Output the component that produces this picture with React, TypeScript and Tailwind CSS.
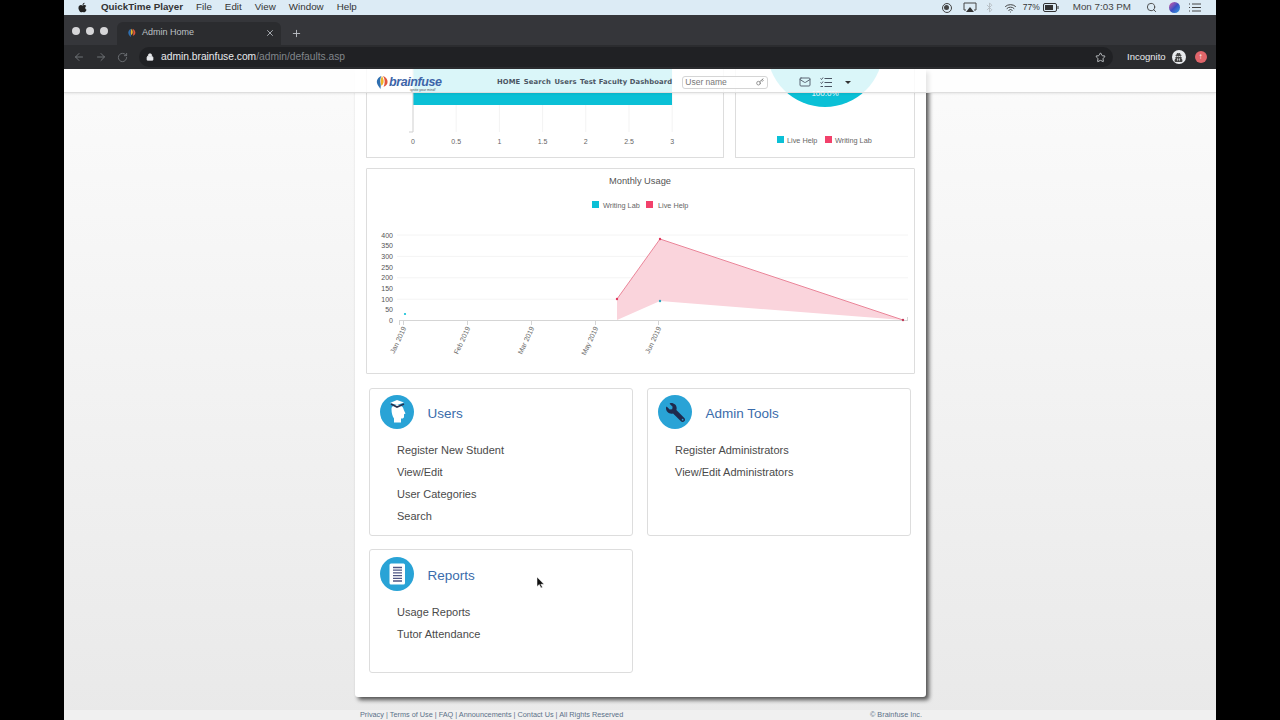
import type { ReactNode } from "react";
import { ArrowLeft, ArrowRight, Bluetooth, Key, Lock, Mail, Plus, RotateCw, Search, Star, Wifi, X } from "lucide-react";
import { FaApple, FaUserSecret, FaWrench } from "react-icons/fa";

const sans = { fontFamily: '"Liberation Sans", Arial, sans-serif' };

function BrainfuseMark({ size = 14 }: { size?: number }) {
  return (
    <svg width={size} height={size} viewBox="0 0 14 14">
      <path d="M6 1C3 2 1 5 2 8c.6 2 2 3 3 5 .6-2 .4-4 0-6C4.700 5 5 3 6 1z" fill="#2f6fb0" />
      <path d="M6.500 1C5 4 5 7 6 10c2-1 2.500-4 1.800-6C7.500 3 7 2 6.500 1z" fill="#f0b429" />
      <path d="M7.500 1c3 1 5 4 4 7-.5 1.500-2 2.500-3.500 3 1.500-3 1.500-7-.5-10z" fill="#e2553d" />
    </svg>
  );
}

function MenuBar() {
  return (
    <div className="flex h-[15px] items-center bg-[#dcebf5] text-[9.8px] text-[#333]" style={sans}>
      <FaApple className="ml-[13px] h-[11px] w-[11px] text-[#222]" />
      <span className="ml-[13px] font-bold">QuickTime Player</span>
      <span className="ml-[13px]">File</span>
      <span className="ml-[13px]">Edit</span>
      <span className="ml-[13px]">View</span>
      <span className="ml-[13px]">Window</span>
      <span className="ml-[13px]">Help</span>
      <div className="ml-auto flex h-full items-center">
        <span className="flex h-[10px] w-[10px] items-center justify-center rounded-full border border-[#444]">
          <span className="h-[5px] w-[5px] rounded-full bg-[#444]" />
        </span>
        <svg className="ml-[11px]" width="14" height="11" viewBox="0 0 14 11">
          <path d="M3 8H1V1h12v7h-2" fill="none" stroke="#444" strokeWidth="1" />
          <path d="M7 5l4 5H3z" fill="#333" />
        </svg>
        <Bluetooth className="ml-[7px] h-[11px] w-[11px] text-[#b5bcc2]" />
        <Wifi className="ml-[9px] h-[12px] w-[13px] text-[#444]" />
        <span className="ml-[6px] text-[8.5px]">77%</span>
        <svg className="ml-[3px]" width="16" height="9" viewBox="0 0 16 9">
          <rect x="0.5" y="0.5" width="13" height="8" rx="1.5" fill="none" stroke="#333" />
          <rect x="2" y="2" width="8" height="5" fill="#333" />
          <rect x="14.5" y="3" width="1" height="3" fill="#333" />
        </svg>
        <span className="ml-[14px] text-[#444]">Mon 7:03 PM</span>
        <Search className="ml-[15px] h-[11px] w-[11px] text-[#444]" />
        <span className="ml-[12px] h-[11px] w-[11px] rounded-full bg-gradient-to-br from-[#d84aa0] via-[#3b4fc4] to-[#2aa0e0]" />
        <svg className="ml-[8px] mr-[15px]" width="13" height="9" viewBox="0 0 13 9">
          <path d="M4 1h9M4 4.5h9M4 8h9M1 1h1M1 4.5h1M1 8h1" stroke="#444" strokeWidth="1" />
        </svg>
      </div>
    </div>
  );
}

function TabBar() {
  return (
    <div className="flex h-[30px] items-end bg-[#35363a]" style={sans}>
      <div className="mb-[10px] ml-[8px] flex gap-[6px]">
        <span className="h-[8px] w-[8px] rounded-full bg-[#d6d6d8]" />
        <span className="h-[8px] w-[8px] rounded-full bg-[#d6d6d8]" />
        <span className="h-[8px] w-[8px] rounded-full bg-[#d6d6d8]" />
      </div>
      <div className="ml-[9px] flex h-[23px] w-[164px] items-center rounded-t-md bg-[#2b2c2f] pb-[1px] pl-[10px] text-[9px] text-[#bdc1c6]">
        <BrainfuseMark size={10} />
        <span className="ml-[5px]">Admin Home</span>
        <X className="ml-auto mr-[6px] h-[10px] w-[10px]" />
      </div>
      <Plus className="mb-[6px] ml-[10px] h-[11px] w-[11px] text-[#bdc1c6]" />
    </div>
  );
}

function ToolBar() {
  return (
    <div className="flex h-[24px] items-center bg-[#2b2c2f] text-[#6f7276]" style={sans}>
      <ArrowLeft className="ml-[9px] h-[12px] w-[12px]" />
      <ArrowRight className="ml-[10px] h-[12px] w-[12px]" />
      <RotateCw className="ml-[10px] h-[11px] w-[11px]" />
      <div className="ml-[11px] flex h-[20px] w-[974px] items-center rounded-full bg-[#202124] pl-[7px] pr-[7px]">
        <Lock className="h-[8px] w-[8px] fill-[#e8eaed] text-[#e8eaed]" />
        <span className="ml-[7px] text-[10.25px] text-[#80868b]">
          <span className="font-medium text-[#e8eaed]">admin.brainfuse.com</span>/admin/defaults.asp
        </span>
        <Star className="ml-auto h-[11px] w-[11px] text-[#c4c7ca]" />
      </div>
      <span className="ml-[14px] text-[9.5px] text-[#e8eaed]">Incognito</span>
      <span className="ml-[6px] flex h-[14px] w-[14px] items-center justify-center rounded-full bg-[#e8eaed]">
        <FaUserSecret className="h-[9px] w-[9px] text-[#444]" />
      </span>
      <span className="ml-[9px] flex h-[12px] w-[12px] items-center justify-center rounded-full bg-[#e0656a] text-[8px] font-bold leading-none text-white">↑</span>
    </div>
  );
}

function TopNav() {
  return (
    <div className="absolute inset-x-0 top-0 z-10 flex h-[24px] items-center border-b border-[#dedede] bg-white/85 pt-[3px] shadow-[0_1px_2px_rgba(0,0,0,0.08)]">
      <div className="relative ml-[311px] flex h-full w-[70px] items-center">
        <BrainfuseMark size={15} />
        <span className="-ml-[1px] text-[12.5px] font-bold italic leading-none tracking-[-0.4px] text-[#3d64a8]" style={sans}>
          brainfuse
        </span>
        <span className="absolute left-[35px] top-[17px] text-[3.5px] leading-none text-[#555]" style={sans}>ignite your mind!</span>
      </div>
      <nav className="ml-[52px] flex gap-[3.5px] text-[6.8px] font-bold tracking-[0.12px] text-[#4b5563]" style={{ fontFamily: '"DejaVu Sans", sans-serif' }}>
        <span>HOME</span>
        <span>Search</span>
        <span>Users</span>
        <span>Test Faculty Dashboard</span>
      </nav>
      <div className="ml-[10px] flex h-[13px] w-[86px] items-center rounded-[3px] border border-[#d5d5d5] bg-white/70 pl-[2px] pr-[3px] text-[8.5px] text-[#777]" style={sans}>
        User name
        <Key className="ml-auto h-[8px] w-[8px] text-[#666]" />
      </div>
      <Mail className="ml-[31px] h-[12px] w-[12px] text-[#5a6572]" />
      <svg className="ml-[9px]" width="12" height="11" viewBox="0 0 12 11">
        <path d="M4.5 1.5H12M4.5 5.5H12M4.5 9.5H12M.5 1.500l1 1 1.500-2M.5 5.500l1 1 1.500-2M.5 9.500h2.500" fill="none" stroke="#4b5563" strokeWidth="1" />
      </svg>
      <span className="ml-[13px] h-0 w-0 border-x-[3px] border-t-[3px] border-x-transparent border-t-[#333]" />
    </div>
  );
}

function BarCard() {
  const ticks = ["0", "0.5", "1", "1.5", "2", "2.5", "3"];
  return (
    <div className="h-[89px] w-[358px] rounded-b-[1px] border border-t-0 border-[#dddddd]">
      <svg width="356" height="88" viewBox="367 69 356 88" className="block" style={sans}>
        {ticks.map((t, i) => (
          <g key={t}>
            {i > 0 && <line x1={413 + i * 43.2} x2={413 + i * 43.2} y1="69" y2="132" stroke="#f3f3f3" />}
            <text x={413 + i * 43.2} y="143.5" textAnchor="middle" fontSize="7" fill="#666">{t}</text>
          </g>
        ))}
        <rect x="413" y="69" width="259" height="36" fill="#0bc0d6" />
        <path d="M409 132h4V69" fill="none" stroke="#cfcfcf" />
      </svg>
    </div>
  );
}

function PieCard() {
  return (
    <div className="h-[89px] w-[180px] rounded-b-[1px] border border-t-0 border-[#dddddd]">
      <svg width="178" height="88" viewBox="736 69 178 88" className="block" style={sans}>
        <circle cx="825" cy="49" r="58" fill="#0bc0d6" />
        <text x="825" y="96" textAnchor="middle" fontSize="8" fill="#fff">100.0%</text>
        <rect x="777" y="136" width="7" height="7" fill="#0bc0d6" />
        <text x="787" y="143" fontSize="7.3" fill="#666">Live Help</text>
        <rect x="825" y="136" width="7" height="7" fill="#f2416b" />
        <text x="835" y="143" fontSize="7.3" fill="#666">Writing Lab</text>
      </svg>
    </div>
  );
}

function MonthlyCard() {
  const yLabels = [400, 350, 300, 250, 200, 150, 100, 50, 0];
  const months = [
    { label: "Jan 2019", x: 404 },
    { label: "Feb 2019", x: 468 },
    { label: "Mar 2019", x: 532 },
    { label: "May 2019", x: 596 },
    { label: "Jun 2019", x: 659 },
  ];
  return (
    <div className="mx-[11px] mt-[10px] h-[206px] rounded-[1px] border border-[#dddddd]">
      <svg width="547" height="204" viewBox="367 169 547 204" className="block" style={sans}>
        <text x="640" y="183.5" textAnchor="middle" fontSize="9.3" fill="#555">Monthly Usage</text>
        <rect x="592" y="201" width="7" height="7" fill="#0bc0d6" />
        <text x="603" y="208" fontSize="7.3" fill="#666">Writing Lab</text>
        <rect x="646" y="201" width="7" height="7" fill="#f2416b" />
        <text x="658" y="208" fontSize="7.3" fill="#666">Live Help</text>
        {yLabels.map((v, i) => (
          <g key={v}>
            {i % 2 === 0 && i < 8 && <line x1="397" x2="908" y1={235 + i * 10.7} y2={235 + i * 10.7} stroke="#f4f4f4" />}
            <text x="393" y={237.5 + i * 10.7} textAnchor="end" fontSize="7" fill="#555">{v}</text>
          </g>
        ))}
        <polygon points="617,299 660,239 903,320 660,301 617,320" fill="#fad4dc" />
        <polyline points="617,299 660,239 903,320" fill="none" stroke="#e8798f" strokeWidth="0.9" />
        <line x1="399" x2="908" y1="320.5" y2="320.5" stroke="#d5d5d5" />
        <path d="M399.5 320v5M907.5 317v4" stroke="#d5d5d5" />
        {months.map((m) => (
          <g key={m.label}>
            <line x1={m.x - 0.5} x2={m.x - 0.5} y1="320" y2="325" stroke="#d5d5d5" />
            <text x="0" y="0" textAnchor="end" fontSize="7" fill="#666" transform={`translate(${m.x + 2.5} 328) rotate(-65)`}>{m.label}</text>
          </g>
        ))}
        <circle cx="405" cy="314" r="1.1" fill="#0bc0d6" />
        <circle cx="660" cy="301" r="1.2" fill="#2aa6bd" />
        <circle cx="617" cy="299" r="1.2" fill="#e2385f" />
        <circle cx="660" cy="239" r="1.2" fill="#e2385f" />
        <circle cx="903" cy="320" r="1.2" fill="#c2395a" />
      </svg>
    </div>
  );
}

function UsersIcon() {
  return (
    <svg width="34" height="34" viewBox="0 0 34 34">
      <circle cx="17" cy="17" r="17" fill="#29a3d6" />
      <path d="M11.500 14C11.500 11 14.500 10 17.500 10C21 10 23.500 12 23.800 15L25.500 18.500L24 19.200V22C24 23 23 23.700 21 23.500V27.500H14V23.500C12.500 21.500 11.500 18 11.500 14Z" fill="#fff" />
      <path d="M10 8L17 5L24 7.500L17 10Z" fill="#fff" />
      <path d="M11 9L17 12L24 9" fill="none" stroke="#26304f" strokeWidth="1.700" />
    </svg>
  );
}

function ReportsIcon() {
  return (
    <svg width="34" height="34" viewBox="0 0 34 34">
      <circle cx="17" cy="17" r="17" fill="#29a3d6" />
      <rect x="9.500" y="6.500" width="15.500" height="21" rx="1.500" fill="#fff" />
      <path d="M13 10.500h9M13 13.200h9M13 15.900h9M13 18.600h9M13 21.300h9M13 24h9" stroke="#4f5684" strokeWidth="1.300" />
    </svg>
  );
}

function WrenchIcon() {
  return (
    <span className="flex h-[34px] w-[34px] items-center justify-center rounded-full bg-[#29a3d6]">
      <FaWrench className="h-[19px] w-[19px] -scale-x-100 text-[#1f2a4d]" />
    </span>
  );
}

function ToolCard({ title, icon, links, box }: { title: string; icon: ReactNode; links: string[]; box: string }) {
  return (
    <div className={`rounded-[3px] border border-[#dddddd] pl-[10px] ${box}`}>
      <div className="flex items-center">
        {icon}
        <span className="ml-[13.5px] mt-[4px] text-[13.5px] leading-none text-[#3a6cab]">{title}</span>
      </div>
      <div className="ml-[17px] mt-[10px] text-[11px] leading-[22px] text-[#4a4a4a]">
        {links.map((link) => (
          <div key={link}>{link}</div>
        ))}
      </div>
    </div>
  );
}

export default function App() {
  return (
    <div className="flex h-[720px] w-[1280px] justify-center overflow-hidden bg-black">
      <div className="flex w-[1152px] flex-col">
        <MenuBar />
        <TabBar />
        <ToolBar />
        <div className="relative flex h-[651px] flex-col overflow-hidden bg-gradient-to-b from-[#fbfbfb] to-[#e9e9e9]">
          <TopNav />
          <div className="ml-[291px] h-[628px] w-[571px] rounded-b-[3px] bg-white shadow-[3px_3px_4px_rgba(0,0,0,0.65)]" style={sans}>
            <div className="mx-[11px] flex justify-between">
              <BarCard />
              <PieCard />
            </div>
            <MonthlyCard />
            <div className="ml-[14px] mt-[14px] grid grid-cols-[264px_264px] gap-x-[14px] gap-y-[13px]">
              <ToolCard title="Users" icon={<UsersIcon />} links={["Register New Student", "View/Edit", "User Categories", "Search"]} box="h-[148px] pt-[6px]" />
              <ToolCard title="Admin Tools" icon={<WrenchIcon />} links={["Register Administrators", "View/Edit Administrators"]} box="h-[148px] pt-[6px]" />
              <ToolCard title="Reports" icon={<ReportsIcon />} links={["Usage Reports", "Tutor Attendance"]} box="h-[124px] pt-[7px]" />
            </div>
          </div>
          <div className="mt-auto flex h-[10px] items-center justify-between bg-[#f0f0f0] pl-[296px] pr-[294px] pt-[1px] text-[7.3px] text-[#5b7089]" style={sans}>
            <span>Privacy | Terms of Use | FAQ | Announcements | Contact Us | All Rights Reserved</span>
            <span>© Brainfuse Inc.</span>
          </div>
          <svg className="absolute left-[472px] top-[507px]" width="9" height="13" viewBox="0 0 9 13">
            <path d="M1 1v9.500l2.300-2 1.700 3.500 1.500-.7L4.800 8.300H8z" fill="#111" stroke="#fff" strokeWidth="0.5" />
          </svg>
        </div>
      </div>
    </div>
  );
}
